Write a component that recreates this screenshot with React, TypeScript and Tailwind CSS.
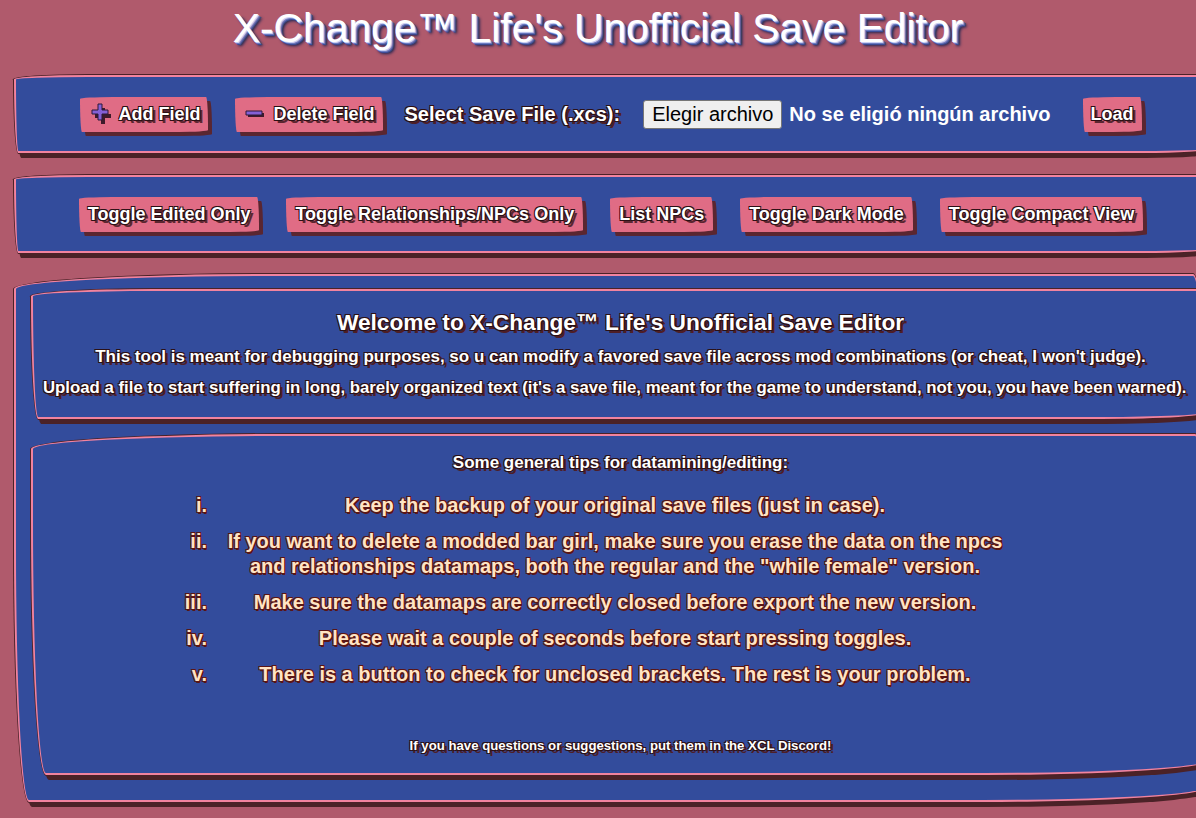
import React from "react";

const sketchy = "rounded-[255px_15px_225px_15px/15px_225px_15px_255px]";
const panel =
  "border-2 border-[#f2839f] bg-[#334c9c] shadow-[0_0_0_1px_#4b2227,3px_4px_0_1px_#4b2227] " + sketchy;
const btnText =
  "[text-shadow:1px_1px_0_#2b1015,-1px_-1px_0_#2b1015,1px_-1px_0_#2b1015,-1px_1px_0_#2b1015,3px_3px_0_#5b2630]";
const btn =
  "flex flex-none items-center h-[35px] bg-[#e06c85] text-white font-bold text-[18px] leading-[21px] shadow-[4px_4px_0_#5a2630] " +
  sketchy +
  " " +
  btnText;

function PlusIcon() {
  return (
    <svg width="22" height="22" viewBox="0 0 22 22" className="flex-none">
      <path d="M9 3h4v6h6v4h-6v6h-4v-6h-6v-4h6z" fill="#3d1a2a" transform="translate(2 2)" />
      <path d="M8 1h4v6h6v4h-6v6h-4v-6h-6v-4h6z" fill="#8460d6" stroke="#2c1838" strokeWidth="1" />
    </svg>
  );
}

function MinusIcon() {
  return (
    <svg width="22" height="22" viewBox="0 0 22 22" className="flex-none">
      <path d="M3 10h16v4h-16z" fill="#3d1a2a" />
      <path d="M1 8h16v4h-16z" fill="#8460d6" stroke="#2c1838" strokeWidth="1" />
    </svg>
  );
}

const tips: { n: string; lines: string }[] = [
  { n: "i.", lines: "Keep the backup of your original save files (just in case)." },
  {
    n: "ii.",
    lines:
      'If you want to delete a modded bar girl, make sure you erase the data on the npcs and relationships datamaps, both the regular and the "while female" version.',
  },
  { n: "iii.", lines: "Make sure the datamaps are correctly closed before export the new version." },
  { n: "iv.", lines: "Please wait a couple of seconds before start pressing toggles." },
  { n: "v.", lines: "There is a button to check for unclosed brackets. The rest is your problem." },
];

const tipShadow =
  "[text-shadow:1px_1px_0_#5a1515,-1px_-1px_0_#5a1515,1px_-1px_0_#5a1515,-1px_1px_0_#5a1515,1px_2px_0_#5a1515]";
const whiteShadow =
  "[text-shadow:1px_1px_0_#2b1015,-1px_-1px_0_#2b1015,1px_-1px_0_#2b1015,-1px_1px_0_#2b1015,3px_3px_0_#4e1e26]";

export default function App() {
  return (
    <div className="w-[1196px] h-[818px] overflow-hidden bg-[#b05a6c] font-['Liberation_Sans',Arial,sans-serif]">
      <h1 className="pt-[5px] text-center text-[40.8px] leading-[46px] font-normal text-white whitespace-nowrap [text-shadow:1px_1px_0_#c8d0f4,2px_2px_0_#6a7ac0,3px_3px_0_#3c4c96,4px_4px_3px_#18224f]">
        X-Change™ Life's Unofficial Save Editor
      </h1>

      {/* file controls */}
      <div className={"ml-[14px] mt-[24px] w-[1194px] h-[78px] flex items-center justify-center " + panel}>
        <button className={btn + " pl-[10px] pr-[8px] gap-[6px]"}>
          <PlusIcon />
          <span>Add Field</span>
        </button>
        <button className={btn + " ml-[27px] pl-[10px] pr-[8px] gap-[6px]"}>
          <MinusIcon />
          <span>Delete Field</span>
        </button>
        <span className={"ml-[22px] text-white font-bold text-[20px] whitespace-nowrap " + whiteShadow}>
          Select Save File (.xcs):
        </span>
        <span className="ml-[23px] flex-none h-[29px] px-[8px] flex items-center bg-[#efefef] border border-[#767676] rounded-[3px] text-black text-[20px] leading-[23px] whitespace-nowrap">
          Elegir archivo
        </span>
        <span className="ml-[7px] text-white font-bold text-[20px] whitespace-nowrap">No se eligió ningún archivo</span>
        <button className={btn + " ml-[32px] px-[8px]"}>Load</button>
      </div>

      {/* view toggles */}
      <div className={"ml-[14px] mt-[22px] w-[1194px] h-[78px] flex items-center justify-center gap-[27px] " + panel}>
        <button className={btn + " px-[9px]"}>Toggle Edited Only</button>
        <button className={btn + " px-[9px]"}>Toggle Relationships/NPCs Only</button>
        <button className={btn + " px-[9px]"}>List NPCs</button>
        <button className={btn + " px-[9px]"}>Toggle Dark Mode</button>
        <button className={btn + " px-[9px]"}>Toggle Compact View</button>
      </div>

      {/* main content */}
      <div className={"ml-[14px] mt-[21px] w-[1194px] h-[528px] pt-[13px] pl-[15px] flex flex-col gap-[15px] " + panel}>
        <div className={"flex-none w-[1179px] h-[130px] pt-[18px] px-[10px] text-center text-white font-bold " + panel}>
          <h2 className={"text-[22.7px] leading-[26px] whitespace-nowrap " + whiteShadow}>
            Welcome to X-Change™ Life's Unofficial Save Editor
          </h2>
          <p className={"mt-[12px] text-[17px] leading-[20px] whitespace-nowrap " + whiteShadow}>
            This tool is meant for debugging purposes, so u can modify a favored save file across mod combinations (or
            cheat, I won't judge).
          </p>
          <p className={"mt-[11px] text-[16.8px] leading-[20px] whitespace-nowrap text-left " + whiteShadow}>
            Upload a file to start suffering in long, barely organized text (it's a save file, meant for the game to
            understand, not you, you have been warned).
          </p>
        </div>

        <div className={"flex-none w-[1179px] h-[341px] pt-[17px] px-[10px] font-bold " + panel}>
          <h3 className={"text-center text-white text-[17px] leading-[20px] " + whiteShadow}>
            Some general tips for datamining/editing:
          </h3>
          <ol className="mt-[20px] flex flex-col gap-[11px]">
            {tips.map((t) => (
              <li key={t.n} className={"flex text-[20px] leading-[25px] text-[#ffe4c4] " + tipShadow}>
                <span className="flex-none w-[164px] text-right">{t.n}</span>
                <span className="flex-none ml-[13px] w-[790px] text-center">{t.lines}</span>
              </li>
            ))}
          </ol>
          <p className={"mt-[51px] text-center text-white text-[13.2px] leading-[16px] " + whiteShadow}>
            If you have questions or suggestions, put them in the XCL Discord!
          </p>
        </div>
      </div>
    </div>
  );
}
